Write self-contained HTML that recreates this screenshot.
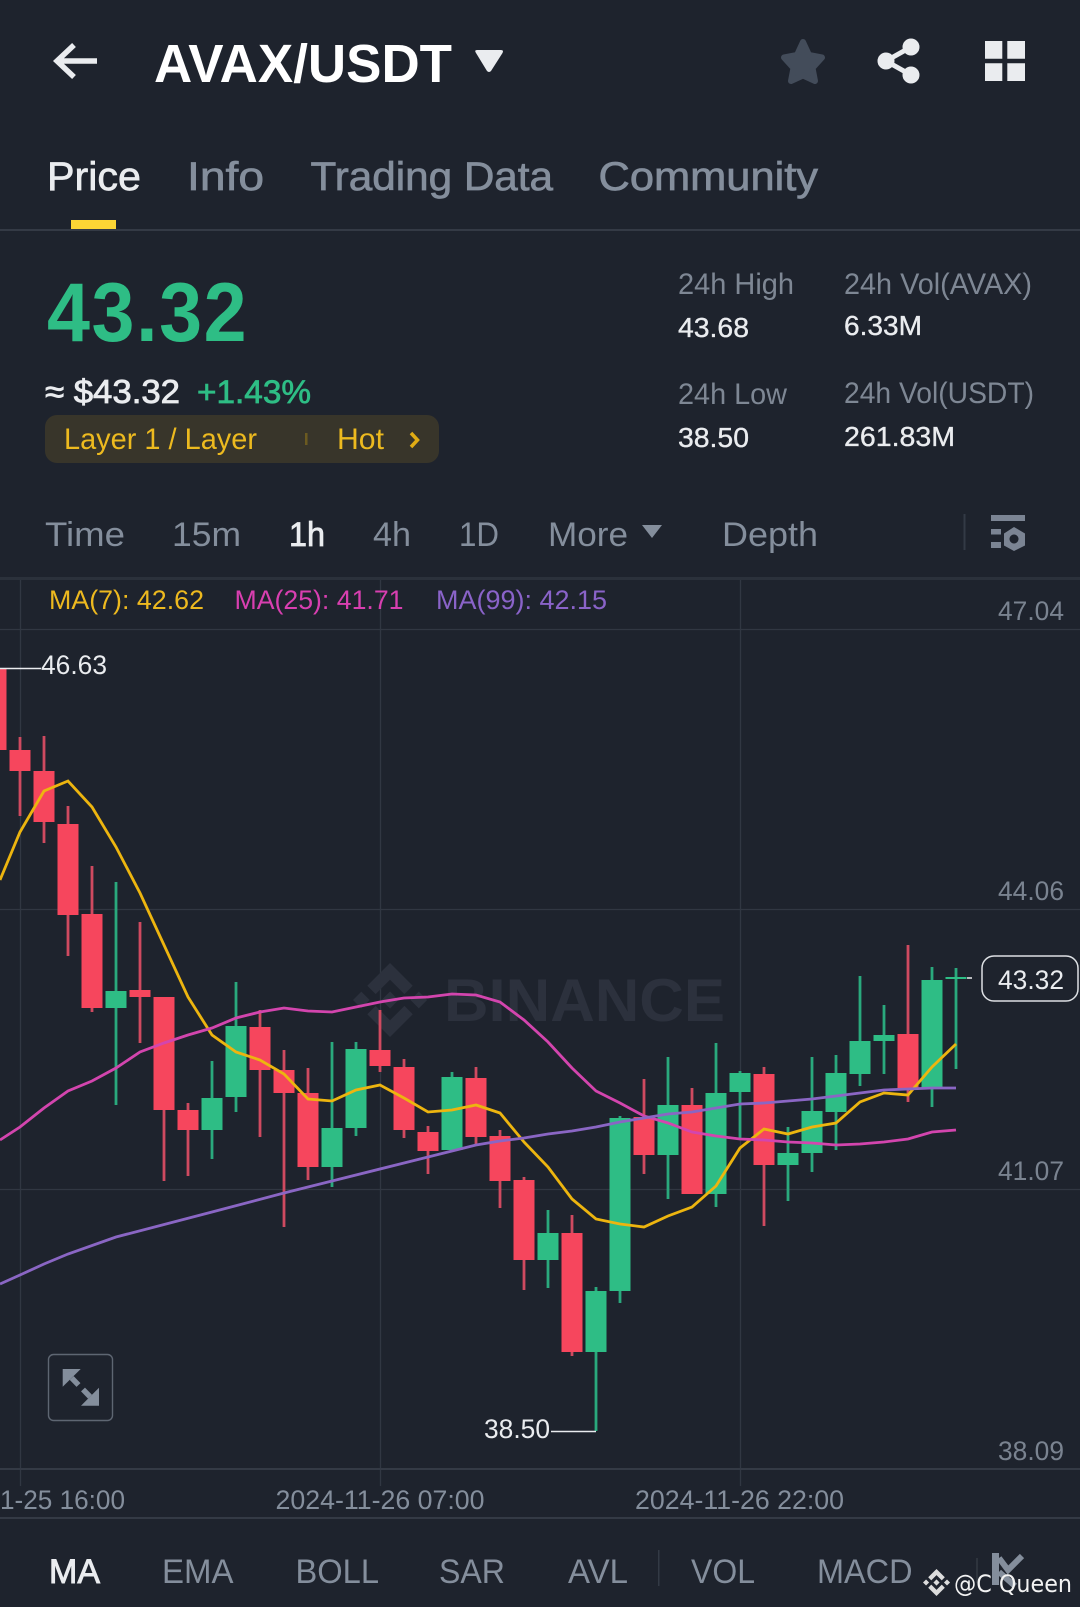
<!DOCTYPE html>
<html lang="en">
<head>
<meta charset="utf-8">
<title>AVAX/USDT</title>
<style>
html,body{margin:0;padding:0;background:#1E232D;width:1080px;height:1607px;overflow:hidden}
svg{display:block}
text{font-family:"Liberation Sans",sans-serif;fill:#848E9C}
.w{fill:#EAECEF}
.ax{font-size:27px;fill:#7A8390}
.st{font-size:30px;fill:#7E8794}
.sv{font-size:28px;fill:#EAECEF;stroke:#EAECEF;stroke-width:.35}
.tab{font-size:40px;stroke-width:.7;stroke:#848E9C}
.t2{font-size:34px}
.ma{font-size:27px}
.dt{font-size:27px;fill:#848E9C}
</style>
</head>
<body>
<svg xmlns="http://www.w3.org/2000/svg" width="1080" height="1607" viewBox="0 0 1080 1607">
<rect width="1080" height="1607" fill="#1E232D"/>

<!-- header -->
<path d="M97 61H58M74 45L57 61L74 77" fill="none" stroke="#EAECEF" stroke-width="5.500"/>
<text x="154" y="82" font-size="54" font-weight="700" textLength="298" lengthAdjust="spacingAndGlyphs" style="fill:#fff">AVAX/USDT</text>
<path d="M477 50H501Q504 50 502.500 53L491 71Q489 73 487 71L476 53Q474 50 477 50Z" fill="#EAECEF"/>
<path d="M803 42L809 55L822 57.500L812.500 68L815 81L803 75.500L791 81L793.500 68L784 57.500L797 55Z" fill="#434C5A" stroke="#434C5A" stroke-width="6" stroke-linejoin="round"/>
<g fill="#EAECEF" stroke="#EAECEF"><circle cx="911" cy="47" r="8"/><circle cx="886" cy="61" r="8"/><circle cx="911" cy="75" r="8"/><path d="M911 47L886 61L911 75" fill="none" stroke-width="5"/></g>
<path d="M985 41h17.300v17.700h-17.300zM1007.300 41h17.700v17.700h-17.700zM985 63.300h17.300v17.700h-17.300zM1007.300 63.300h17.700v17.700h-17.700z" fill="#EAECEF"/>

<!-- tabs -->
<text class="tab" x="47" y="190" textLength="94" lengthAdjust="spacingAndGlyphs" style="fill:#EAECEF;stroke:#EAECEF">Price</text>
<text class="tab" x="187" y="190" textLength="77" lengthAdjust="spacingAndGlyphs">Info</text>
<text class="tab" x="310.500" y="190" textLength="242.500" lengthAdjust="spacingAndGlyphs">Trading Data</text>
<text class="tab" x="598.500" y="190" textLength="219.500" lengthAdjust="spacingAndGlyphs">Community</text>
<rect x="71" y="220" width="45" height="9" fill="#FCD535"/>
<rect x="0" y="229" width="1080" height="2" fill="#343A45"/>

<!-- price block -->
<text transform="translate(47,341) scale(.92,1)" font-size="84" font-weight="700" textLength="217" lengthAdjust="spacing" style="fill:#2EBD85">43.32</text>
<text x="45" y="403" font-size="33" textLength="135" lengthAdjust="spacingAndGlyphs" style="fill:#EAECEF;stroke:#EAECEF;stroke-width:.8">≈ $43.32</text>
<text x="197" y="403" font-size="32" textLength="114" lengthAdjust="spacingAndGlyphs" style="fill:#2EBD85;stroke:#2EBD85;stroke-width:.7">+1.43%</text>
<rect x="45" y="415" width="394" height="48" rx="12" fill="#38352A"/>
<text x="64" y="449" font-size="30" textLength="193" lengthAdjust="spacingAndGlyphs" style="fill:#EDBA1F">Layer 1 / Layer</text>
<rect x="305" y="433" width="2.500" height="12" fill="#6B5A20"/>
<text x="337" y="449" font-size="30" textLength="47" lengthAdjust="spacingAndGlyphs" style="fill:#EDBA1F">Hot</text>
<path d="M411 433L417.500 440L411 447" fill="none" stroke="#E0AC14" stroke-width="3.500"/>

<text class="st" x="678" y="294" textLength="116" lengthAdjust="spacingAndGlyphs">24h High</text>
<text class="st" x="844" y="294" textLength="188" lengthAdjust="spacingAndGlyphs">24h Vol(AVAX)</text>
<text class="sv" x="678" y="337" textLength="71" lengthAdjust="spacingAndGlyphs">43.68</text>
<text class="sv" x="844" y="335" textLength="78" lengthAdjust="spacingAndGlyphs">6.33M</text>
<text class="st" x="678" y="404" textLength="109" lengthAdjust="spacingAndGlyphs">24h Low</text>
<text class="st" x="844" y="403" textLength="190" lengthAdjust="spacingAndGlyphs">24h Vol(USDT)</text>
<text class="sv" x="678" y="447" textLength="71" lengthAdjust="spacingAndGlyphs">38.50</text>
<text class="sv" x="844" y="446" textLength="111" lengthAdjust="spacingAndGlyphs">261.83M</text>

<!-- time tabs -->
<text class="t2" x="45" y="546" textLength="80" lengthAdjust="spacingAndGlyphs">Time</text>
<text class="t2" x="172" y="546" textLength="69" lengthAdjust="spacingAndGlyphs">15m</text>
<text class="t2" x="289" y="546" textLength="36" lengthAdjust="spacingAndGlyphs" style="fill:#EAECEF;stroke:#EAECEF;stroke-width:.8">1h</text>
<text class="t2" x="373" y="546" textLength="38" lengthAdjust="spacingAndGlyphs">4h</text>
<text class="t2" x="459" y="546" textLength="40" lengthAdjust="spacingAndGlyphs">1D</text>
<text class="t2" x="548" y="546" textLength="80" lengthAdjust="spacingAndGlyphs">More</text>
<text class="t2" x="722" y="546" textLength="96" lengthAdjust="spacingAndGlyphs">Depth</text>
<path d="M642 525H662L652 538Z" fill="#848E9C"/>
<rect x="963.500" y="514" width="2" height="36" fill="#333A45"/>
<path d="M991 515h34v6h-34zM991 529h10v5.500h-10zM991 542h10v6h-10z" fill="#7B8493"/>
<path fill-rule="evenodd" d="M1014 527L1025 533.500V545.500L1014 551L1004 545.500V533.500ZM1014 534.500a4.500 4.500 0 1 0 .01 0Z" fill="#7B8493"/>

<!-- chart grid -->
<rect x="0" y="577" width="1080" height="3" fill="#2B313B"/>
<path d="M0 629.500H1080M0 909.500H1080M0 1189.500H1080M20.500 580V1486M380.500 580V1486M740.500 580V1486" stroke="#313742" stroke-width="1.300" fill="none"/>
<rect x="0" y="1468" width="1080" height="2" fill="#343A45"/>
<rect x="0" y="1517" width="1080" height="2" fill="#343A45"/>

<!-- watermark -->
<g transform="translate(353,963) scale(.5845)" fill="#2C313D">
<path d="M38.730 53.200l24.590-24.580 24.600 24.600 14.300-14.310L63.320 0 24.430 38.880 38.730 53.200zM0 63.310l14.310-14.310 14.310 14.310-14.310 14.300zM38.730 73.410l24.590 24.590 24.600-24.600 14.310 14.290-38.900 38.910-38.910-38.880-.01-.02zM98.280 63.310l14.310-14.310 14.310 14.310-14.310 14.310zM77.830 63.300L63.320 48.780 52.590 59.510l-1.240 1.230-2.540 2.540 14.510 14.500 14.510-14.470z"/>
</g>
<text x="444" y="1021" font-size="60" font-weight="700" textLength="281" lengthAdjust="spacingAndGlyphs" style="fill:#2C313D">BINANCE</text>

<!-- legend -->
<text class="ma" x="49" y="609" textLength="155" lengthAdjust="spacingAndGlyphs" style="fill:#EDB91F">MA(7): 42.62</text>
<text class="ma" x="234.500" y="609" textLength="169" lengthAdjust="spacingAndGlyphs" style="fill:#D83FB0">MA(25): 41.71</text>
<text class="ma" x="436" y="609" textLength="171" lengthAdjust="spacingAndGlyphs" style="fill:#8A63C9">MA(99): 42.15</text>

<!-- axis labels -->
<text class="ax" x="998" y="620" textLength="66" lengthAdjust="spacingAndGlyphs">47.04</text>
<text class="ax" x="998" y="900" textLength="66" lengthAdjust="spacingAndGlyphs">44.06</text>
<text class="ax" x="998" y="1180" textLength="66" lengthAdjust="spacingAndGlyphs">41.07</text>
<text class="ax" x="998" y="1460" textLength="66" lengthAdjust="spacingAndGlyphs">38.09</text>

<!-- wicks -->
<path fill="none" stroke="#CF4A60" stroke-width="2.800" d="M20 737V816M44 736V843M68 806V956M92 866V1012M140 922V1043M164 997V1181M188 1103V1176M260 1010V1137M284 1050V1227M308 1068V1180M380 1010V1072M404 1059V1138M428 1126V1174M476 1067V1145M500 1130V1208M524 1177V1290M572 1215V1356M644 1079V1174M692 1088V1194M764 1067V1226M908 945V1102"/>
<path fill="none" stroke="#2AA97D" stroke-width="2.800" d="M116 882V1105M212 1061V1159M236 982V1112M332 1042V1187M356 1042V1136M452 1072V1150M548 1210V1288M596 1287V1431M620 1116V1303M668 1057V1199M716 1043V1207M740 1071V1138M788 1127V1201M812 1057V1172M836 1055V1150M860 976V1086M884 1005V1074M932 967V1107M956 968V1069"/>
<!-- bodies -->
<path fill="none" stroke="#F6465D" stroke-width="21" d="M-4 668V750M20 750V771M44 771V822M68 824V915M92 914V1008M140 990V997M164 997V1110M188 1110V1130M260 1027V1070M284 1070V1093M308 1093V1167M380 1050V1066M404 1067V1130M428 1132V1151M476 1078V1137M500 1136V1181M524 1180V1260M572 1233V1352M644 1117V1155M692 1105V1194M764 1074V1165M908 1034V1090"/>
<path fill="none" stroke="#2EBD85" stroke-width="21" d="M116 991V1008M212 1098V1130M236 1026V1097M332 1128V1167M356 1049V1128M452 1077V1150M548 1233V1260M596 1291V1352M620 1118V1291M668 1105V1155M716 1093V1194M740 1073V1092M788 1153V1165M812 1111V1153M836 1073V1112M860 1041V1074M884 1035V1041M932 980V1088M956 977V979"/>

<!-- MA lines -->
<polyline fill="none" stroke="#EDB50F" stroke-width="2.800" points="0,880 20,832 44,791 68,781 92,807 116,847 140,893 164,945 188,997 212,1035 236,1052 260,1060 284,1074 308,1099 332,1101 356,1090 380,1085 404,1098 428,1112 452,1110 476,1105 500,1113 524,1142 548,1167 572,1199 596,1219 620,1224 644,1227 668,1216 692,1207 716,1186 740,1148 764,1129 788,1134 812,1127 836,1123 860,1102 884,1093 908,1095 932,1067 956,1044"/>
<polyline fill="none" stroke="#D345AE" stroke-width="2.800" points="0,1140 20,1127 44,1108 68,1091 92,1081 116,1068 140,1052 164,1043 188,1035 212,1028 236,1018 260,1012 284,1008 308,1011 332,1012 356,1007 380,1002 404,998 428,997 452,994 476,995 500,1002 524,1020 548,1042 572,1068 596,1091 620,1103 644,1116 668,1123 692,1132 716,1136 740,1139 764,1140 788,1142 812,1143 836,1145 860,1144 884,1142 908,1139 932,1132 956,1130"/>
<polyline fill="none" stroke="#8A66C4" stroke-width="2.800" points="0,1284 20,1275 44,1264 68,1254 116,1237 212,1212 284,1193 332,1181 400,1164 428,1157 452,1151 476,1145 500,1141 524,1138 548,1134 572,1131 596,1127 620,1122 644,1118 668,1114 692,1112 716,1108 740,1104 764,1103 788,1101 812,1099 836,1096 860,1093 884,1090 908,1089 932,1088 956,1088"/>

<!-- markers -->
<path d="M0 668.500H41M551 1431.500H596M967 978H972" stroke="#EAECEF" stroke-width="1.500" fill="none"/>
<text x="41" y="674" font-size="27" textLength="66" lengthAdjust="spacingAndGlyphs" class="w">46.63</text>
<text x="484" y="1438" font-size="27" textLength="66" lengthAdjust="spacingAndGlyphs" class="w">38.50</text>
<rect x="982" y="956" width="96" height="45" rx="12" fill="#1E232D" stroke="#DDE0E4" stroke-width="1.500"/>
<text x="998" y="989" font-size="27" textLength="66" lengthAdjust="spacingAndGlyphs" class="w">43.32</text>

<!-- expand button -->
<rect x="48.500" y="1354.500" width="64" height="66" rx="5" fill="none" stroke="#5E6672" stroke-width="1.400"/>
<path d="M62.700 1369H80.700L62.700 1386.700ZM99 1387.700V1405.700H81Z" fill="#848E9C"/>
<path d="M71.700 1378L78.500 1385M83 1389.500L90 1396.700" stroke="#848E9C" stroke-width="5.500" fill="none"/>

<!-- dates -->
<text class="dt" x="0" y="1509" textLength="125" lengthAdjust="spacingAndGlyphs">1-25 16:00</text>
<text class="dt" x="275.500" y="1509" textLength="209" lengthAdjust="spacingAndGlyphs">2024-11-26 07:00</text>
<text class="dt" x="635" y="1509" textLength="209" lengthAdjust="spacingAndGlyphs">2024-11-26 22:00</text>

<!-- indicators -->
<text class="t2" x="49" y="1583" textLength="51" lengthAdjust="spacingAndGlyphs" style="fill:#EAECEF;stroke:#EAECEF;stroke-width:.9">MA</text>
<text class="t2" x="162" y="1583" textLength="71.500" lengthAdjust="spacingAndGlyphs">EMA</text>
<text class="t2" x="295.500" y="1583" textLength="83.500" lengthAdjust="spacingAndGlyphs">BOLL</text>
<text class="t2" x="439" y="1583" textLength="66" lengthAdjust="spacingAndGlyphs">SAR</text>
<text class="t2" x="568" y="1583" textLength="60" lengthAdjust="spacingAndGlyphs">AVL</text>
<rect x="658" y="1550" width="1.500" height="36" fill="#333A45"/>
<text class="t2" x="691" y="1583" textLength="64" lengthAdjust="spacingAndGlyphs">VOL</text>
<text class="t2" x="817" y="1583" textLength="95.500" lengthAdjust="spacingAndGlyphs">MACD</text>

<!-- K icon -->
<rect x="976" y="1558" width="2" height="25" fill="#2E343D"/>
<path d="M992 1553h7v32h-7z" fill="#848E9C"/>
<path d="M999 1558L1008 1570L1022 1556M999 1572L1015 1586" fill="none" stroke="#848E9C" stroke-width="6"/>

<!-- watermark credit -->
<g transform="translate(923,1569) scale(.2133)" fill="#DCDCDC">
<path d="M38.730 53.200l24.590-24.580 24.600 24.600 14.300-14.310L63.320 0 24.430 38.880 38.730 53.200zM0 63.310l14.310-14.310 14.310 14.310-14.310 14.300zM38.730 73.410l24.590 24.590 24.600-24.600 14.310 14.290-38.900 38.910-38.910-38.880-.01-.02zM98.280 63.310l14.310-14.310 14.310 14.310-14.310 14.310zM77.830 63.300L63.320 48.780 52.590 59.510l-1.240 1.230-2.540 2.540 14.510 14.500 14.510-14.470z"/>
</g>
<text x="954" y="1592" font-size="24" textLength="118" lengthAdjust="spacingAndGlyphs" style="font-family:'DejaVu Sans',sans-serif;fill:#F2F2F2">@C Queen</text>
</svg>
</body>
</html>
